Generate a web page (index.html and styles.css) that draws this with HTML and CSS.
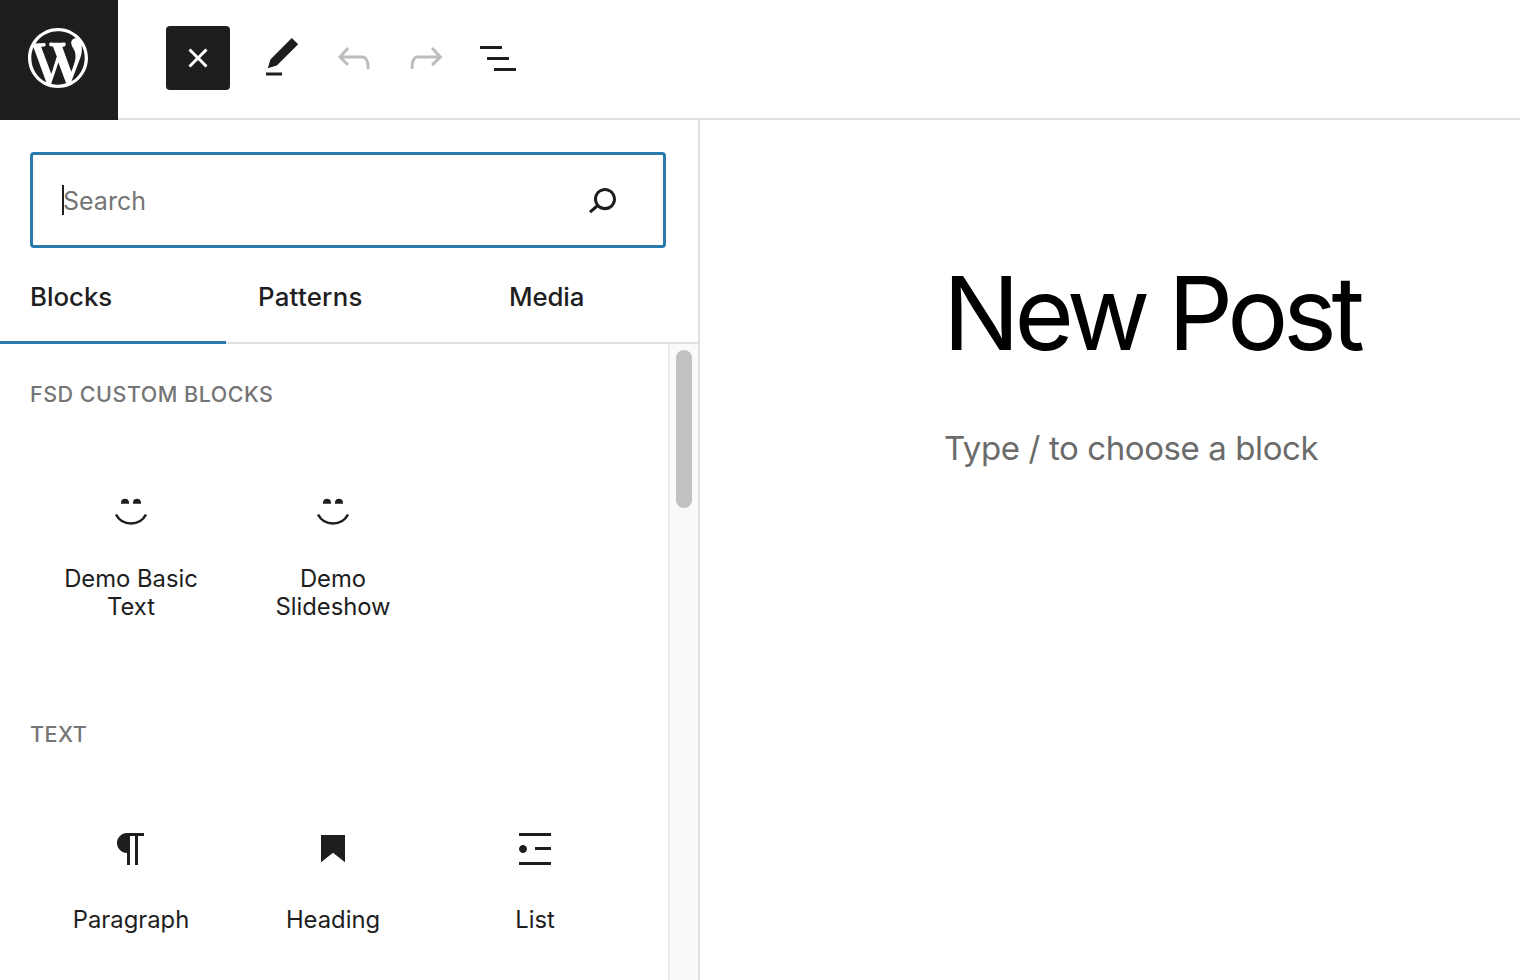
FILE: index.html
```html
<!DOCTYPE html>
<html lang="en">
<head>
<meta charset="utf-8">
<title>New Post</title>
<link rel="stylesheet" href="styles.css">
</head>
<body>
<div class="app">
  <header class="header">
    <div class="logo">
      <svg class="logo-icon" viewBox="0 0 20 20"><path fill="#fff" d="M20 10c0-5.51-4.49-10-10-10C4.48 0 0 4.49 0 10c0 5.52 4.48 10 10 10 5.51 0 10-4.48 10-10zM7.78 15.37L4.37 6.22c.55-.02 1.17-.08 1.17-.08.5-.06.44-1.13-.06-1.11 0 0-1.45.11-2.37.11-.18 0-.37 0-.58-.01C4.12 2.69 6.87 1.11 10 1.11c2.33 0 4.45.87 6.05 2.34-.68-.11-1.65.39-1.65 1.58 0 .74.45 1.36.9 2.1.35.61.55 1.36.55 2.46 0 1.49-1.4 5-1.4 5l-3.03-8.37c.54-.02.82-.17.82-.17.5-.05.44-1.25-.06-1.22 0 0-1.44.12-2.38.12-.87 0-2.33-.12-2.33-.12-.5-.03-.56 1.2-.06 1.22l.92.08 1.26 3.41zM17.41 10c.24-.64.74-1.87.43-4.25.7 1.29 1.05 2.71 1.05 4.25 0 3.29-1.73 6.24-4.4 7.78.97-2.59 1.94-5.2 2.92-7.78zM6.1 18.09C3.12 16.65 1.11 13.53 1.11 10c0-1.3.23-2.48.72-3.59C3.25 10.3 4.67 14.2 6.1 18.09zm4.03-6.63l2.58 6.98c-.86.29-1.76.45-2.71.45-.79 0-1.57-.11-2.29-.33.81-2.38 1.62-4.74 2.42-7.1z"/></svg>
    </div>
    <div class="toolbar">
      <div class="close-btn">
        <svg class="icon" viewBox="0 0 24 24"><path fill="#fff" d="M12 13.06l3.712 3.713 1.061-1.06L13.061 12l3.712-3.712-1.06-1.06L12 10.938 8.288 7.227l-1.061 1.06L10.939 12l-3.712 3.712 1.06 1.061L12 13.061z"/></svg>
      </div>
      <svg class="icon" viewBox="0 0 24 24"><path fill="#1e1e1e" d="M20.1 5.1L16.9 2 6.2 12.7l-1.3 4.4 4.5-1.3L20.1 5.1zM4 20.8h8v-1.5H4v1.5z"/></svg>
      <svg class="icon" viewBox="0 0 24 24"><path fill="#bdbdbd" d="M18.3 11.7c-.6-.6-1.4-.9-2.3-.9H6.7l2.9-3.3-1.1-1-4.5 5L8.5 16l1-1-2.7-2.7H16c.5 0 .9.2 1.3.5 1 1 1 3.4 1 4.5v.3h1.5v-.2c0-1.5 0-4.3-1.5-5.7z"/></svg>
      <svg class="icon" viewBox="0 0 24 24"><path fill="#bdbdbd" d="M15.6 6.5l-1.1 1 2.9 3.3H8c-.9 0-1.7.3-2.3.9-1.4 1.5-1.4 4.2-1.4 5.6v.2h1.5v-.3c0-1.1 0-3.5 1-4.5.3-.3.7-.5 1.3-.5h9.2L14.5 15l1.1 1.1 4.6-4.6-4.6-5z"/></svg>
      <svg class="icon" viewBox="0 0 24 24"><path fill="#1e1e1e" d="M3 6h11v1.5H3V6zm3.5 5.5h11V13h-11v-1.5zM21 17H10v1.5h11V17z"/></svg>
    </div>
  </header>
  <div class="body">
    <aside class="inserter">
      <div class="search-wrap">
        <div class="search">
          <div class="search-text"><span class="caret"></span><span class="search-placeholder">Search</span></div>
          <svg class="icon" viewBox="0 0 24 24"><path fill="#1e1e1e" d="M13.5 6C10.5 6 8 8.5 8 11.5c0 1.1.3 2.1.9 3l-3.4 3 1 1.1 3.4-2.9c1 .9 2.2 1.4 3.6 1.4 3 0 5.5-2.5 5.5-5.5C19 8.5 16.5 6 13.5 6zm0 9.5c-2.2 0-4-1.8-4-4s1.8-4 4-4 4 1.8 4 4-1.8 4-4 4z"/></svg>
        </div>
      </div>
      <nav class="tabs">
        <div class="tab tab-blocks">Blocks</div>
        <div class="tab tab-patterns">Patterns</div>
        <div class="tab tab-media">Media</div>
      </nav>
      <div class="panel">
        <div class="blocks">
          <h2 class="group-title">FSD Custom Blocks</h2>
          <div class="block-grid block-grid-custom">
            <div class="block">
              <svg class="icon" viewBox="0 0 48 48"><path fill="#1e1e1e" d="M14 19c0-2.800 1.700-4.200 4-4.200s4 1.400 4 4.200v.8h-8zM26 19c0-2.800 1.700-4.200 4-4.200s4 1.400 4 4.200v.8h-8z"/><path fill="none" stroke="#1e1e1e" stroke-width="2.600" d="M9 30.500A17 17 0 0 0 39 30.500"/></svg>
              <div class="block-label">Demo Basic Text</div>
            </div>
            <div class="block">
              <svg class="icon" viewBox="0 0 48 48"><path fill="#1e1e1e" d="M14 19c0-2.800 1.700-4.200 4-4.200s4 1.400 4 4.200v.8h-8zM26 19c0-2.800 1.700-4.200 4-4.200s4 1.400 4 4.200v.8h-8z"/><path fill="none" stroke="#1e1e1e" stroke-width="2.600" d="M9 30.500A17 17 0 0 0 39 30.500"/></svg>
              <div class="block-label">Demo Slideshow</div>
            </div>
          </div>
          <h2 class="group-title">Text</h2>
          <div class="block-grid">
            <div class="block">
              <svg class="icon" viewBox="0 0 24 24"><path fill="#1e1e1e" d="m9.99609 14v-.2251l.00391.0001v6.225h1.5v-14.5h2.5v14.5h1.5v-14.5h3v-1.5h-8.50391c-2.76142 0-5 2.23858-5 5 0 2.7614 2.23858 5 5 5z"/></svg>
              <div class="block-label">Paragraph</div>
            </div>
            <div class="block">
              <svg class="icon" viewBox="0 0 24 24"><path fill="#1e1e1e" d="M6 5V18.5911L12 13.8473L18 18.5911V5H6Z"/></svg>
              <div class="block-label">Heading</div>
            </div>
            <div class="block">
              <svg class="icon" viewBox="0 0 24 24"><path fill="#1e1e1e" d="M4 4v1.500h16V4H4zm8 8.500h8V11h-8v1.500zM4 20h16v-1.500H4V20zm4-8c0-1.100-.9-2-2-2s-2 .9-2 2 .9 2 2 2 2-.9 2-2z"/></svg>
              <div class="block-label">List</div>
            </div>
          </div>
        </div>
        <div class="scrollbar"><div class="thumb"></div></div>
      </div>
    </aside>
    <main class="editor">
      <h1 class="post-title">New Post</h1>
      <p class="placeholder">Type / to choose a block</p>
    </main>
  </div>
</div>
</body>
</html>
```
FILE: styles.css
```css
* { box-sizing: border-box; }
html, body { margin: 0; padding: 0; height: 100%; overflow: hidden; background: #fff; }
body { font-family: Inter, "Liberation Sans", sans-serif; color: #1e1e1e; }
.app { width: 1520px; height: 980px; display: flex; flex-direction: column; overflow: hidden; }

.header { display: flex; height: 120px; flex: none; }
.logo { width: 118px; height: 120px; background: #1e1e1e; display: flex; align-items: center; justify-content: center; padding: 0 2px 4px 0; }
.logo-icon { width: 60px; height: 60px; display: block; }
.toolbar { flex: 1; display: flex; align-items: center; gap: 24px; padding: 0 0 2px 48px; border-bottom: 2px solid #e0e0e0; }
.close-btn { width: 64px; height: 64px; background: #1e1e1e; border-radius: 4px; display: flex; align-items: center; justify-content: center; margin-right: 4px; }
.icon { width: 48px; height: 48px; display: block; flex: none; }

.body { flex: 1; display: flex; min-height: 0; }
.inserter { width: 700px; flex: none; border-right: 2px solid #e0e0e0; display: flex; flex-direction: column; min-height: 0; }
.search-wrap { padding: 32px 32px 0 30px; }
.search { height: 96px; border: 3px solid #2a7bab; border-radius: 4px; display: flex; align-items: center; justify-content: space-between; padding: 0 37px 0 29px; }
.search-text { font-size: 25px; color: #757575; display: flex; align-items: center; }
.search-placeholder { padding-top: 2px; }
.caret { width: 2px; height: 30px; background: #1e1e1e; margin-right: -1px; }

.tabs { display: grid; grid-template-columns: 226px 251px 1fr; height: 96px; border-bottom: 2px solid #e0e0e0; }
.tab { font-size: 25.8px; font-weight: 500; line-height: 30px; padding-top: 34px; height: 96px; }
.tab-blocks { padding-left: 30px; border-bottom: 3px solid #2a7bab; }
.tab-patterns { padding-left: 32px; letter-spacing: .25px; }
.tab-media { padding-left: 32px; letter-spacing: -.1px; }

.panel { flex: 1; display: flex; min-height: 0; overflow: hidden; }
.blocks { flex: 1; padding: 37px 0 0 30px; overflow: hidden; }
.group-title { margin: 0; font-size: 21.5px; line-height: 26px; font-weight: 500; letter-spacing: .5px; color: #757575; text-transform: uppercase; }
.block-grid { display: grid; grid-template-columns: repeat(3, 202px); padding-top: 78px; }
.block-grid-custom { height: 314px; padding-top: 77px; }
.block { display: flex; flex-direction: column; align-items: center; text-align: center; }
.block-label { font-size: 23.8px; line-height: 28px; margin-top: 33px; width: 140px; }

.scrollbar { width: 30px; flex: none; background: #fafafa; border-left: 2px solid #ebebeb; padding: 6px 6px 0 6px; }
.thumb { width: 16px; height: 158px; background: #c1c1c1; border-radius: 8px; }

.editor { flex: 1; padding: 137px 0 0 243px; }
.post-title { margin: 0; font-size: 102px; line-height: 112px; font-weight: 400; color: #000; letter-spacing: -5.4px; }
.placeholder { margin: 57px 0 0 1px; font-size: 33px; line-height: 44px; color: #6b6b6b; letter-spacing: -.4px; }
```
